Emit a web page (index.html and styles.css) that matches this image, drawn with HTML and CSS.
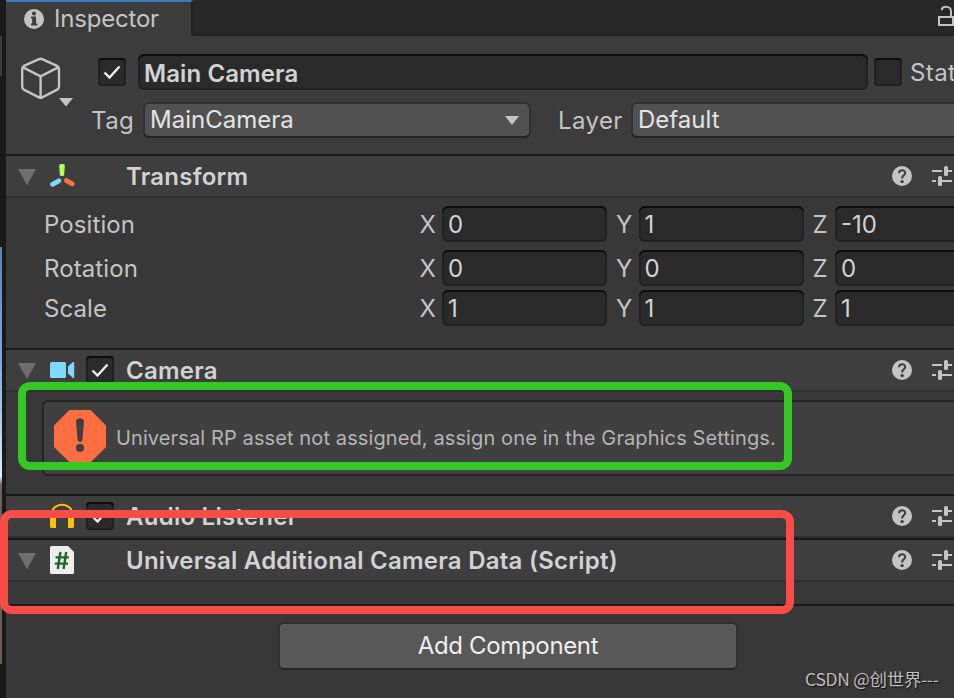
FILE: index.html
```
<!DOCTYPE html>
<html lang="en">

<head>
    <meta charset="UTF-8">
    <meta name="viewport" content="width=device-width, initial-scale=1.0">
    <title>Inspector</title>
    <link rel="stylesheet" href="styles.css">
</head>

<body>

    <!-- shared icons -->
    <svg class="sprite" width="0" height="0">
        <symbol id="icon-check" viewBox="0 0 28 28">
            <path d="M6.5 14.5 L11.5 19.5 L21.5 8.5" fill="none" stroke="#eee" stroke-width="2.4"/>
        </symbol>
        <symbol id="icon-help" viewBox="0 0 20 20">
            <circle cx="10" cy="10" r="10" fill="#c4c4c4"/>
            <path d="M7 7.2 C7 3.3 13.2 3.3 13.2 7 C13.2 9.4 10.1 9.4 10.1 12.4" fill="none" stroke="#3e3e3e" stroke-width="2"/>
            <circle cx="10.1" cy="15.6" r="1.7" fill="#3e3e3e"/>
        </symbol>
        <symbol id="icon-sliders" viewBox="0 0 22 20">
            <path d="M0 5 H10 M16 5 H20 M0 15 H4 M10 15 H20" stroke="#c4c4c4" stroke-width="2"/>
            <rect x="12" y="0" width="4" height="10" rx="1.5" fill="#c4c4c4"/>
            <rect x="6" y="10" width="4" height="10" rx="1.5" fill="#c4c4c4"/>
        </symbol>
    </svg>

    <div class="window">
        <div class="scene-edge">
            <div class="edge-tab"></div>
            <div class="edge-view"></div>
        </div>

        <div class="inspector">
            <div class="tab-bar">
                <div class="tab">
                    <svg width="20" height="20" viewBox="0 0 20 20">
                        <circle cx="10" cy="10" r="10" fill="#c4c4c4"/>
                        <circle cx="10" cy="4.4" r="2" fill="#3c3c3c"/>
                        <path d="M7 7.6 H12 V14.6 H13.4 V16.4 H7 V14.6 H8.2 V9.4 H7 Z" fill="#3c3c3c"/>
                    </svg>
                    <span>Inspector</span>
                </div>
                <svg class="lock" width="16" height="22" viewBox="0 0 16 22">
                    <path d="M1 12 H15 V20 H1 Z M3.6 5 C4.4 0.6 13 0.6 13 6.4 V12" fill="none" stroke="#c4c4c4" stroke-width="2"/>
                </svg>
            </div>

            <div class="object-header">
                <div class="object-icon">
                    <svg width="52" height="50" viewBox="0 0 52 50">
                        <path d="M18 2.2 Q19.6 1.2 21.2 2.2 L36 8.8 Q38 10 38 12 V29.6 Q38 31.6 36.2 32.6 L21.2 40.4 Q19.6 41.2 18 40.4 L2.8 32.6 Q1.2 31.6 1.2 29.6 V12 Q1.2 10 3 8.8 Z M2 10.4 L19.6 19.4 L37.2 10.4 M19.6 19.4 V41" fill="none" stroke="#c4c4c4" stroke-width="2.4"/>
                        <path d="M38 41 H52 L45 49.5 Z" fill="#c4c4c4"/>
                    </svg>
                </div>
                <div class="object-fields">
                    <div class="name-row">
                        <div class="checkbox"><svg width="28" height="28"><use href="#icon-check"/></svg></div>
                        <div class="field name-field">Main Camera</div>
                        <div class="checkbox"></div>
                        <span class="static-label">Static</span>
                    </div>
                    <div class="tag-row">
                        <span class="tag-label">Tag</span>
                        <div class="dropdown tag-dropdown">
                            <span>MainCamera</span>
                            <svg width="14" height="9" viewBox="0 0 14 9"><path d="M0 0 H14 L7 9 Z" fill="#c4c4c4"/></svg>
                        </div>
                        <span class="layer-label">Layer</span>
                        <div class="dropdown layer-dropdown"><span>Default</span></div>
                    </div>
                </div>
            </div>

            <div class="component">
                <div class="component-header">
                    <div class="foldout"></div>
                    <svg class="component-icon" width="26" height="28" viewBox="0 0 26 28">
                        <path d="M9.2 4 Q9.2 2 11 2 H13 Q14.8 2 14.8 4 L14.2 12.4 Q14 14 12.8 14 H11.2 Q10 14 9.8 12.4 Z" fill="#b2ff59"/>
                        <path d="M2.6 22.3 L8.8 18.8" stroke="#80d8ff" stroke-width="4.8" stroke-linecap="round"/>
                        <path d="M16.4 18.6 L22.4 21.8" stroke="#ff6e40" stroke-width="4.8" stroke-linecap="round"/>
                    </svg>
                    <div class="toggle-slot"></div>
                    <span class="component-title">Transform</span>
                    <svg class="help" width="20" height="20"><use href="#icon-help"/></svg>
                    <svg class="sliders" width="22" height="20"><use href="#icon-sliders"/></svg>
                </div>
                <div class="component-body transform-body">
                    <div class="vector-row position-row">
                        <span class="vector-label">Position</span>
                        <span class="axis">X</span><div class="field">0</div>
                        <span class="axis">Y</span><div class="field">1</div>
                        <span class="axis">Z</span><div class="field">-10</div>
                    </div>
                    <div class="vector-row rotation-row">
                        <span class="vector-label">Rotation</span>
                        <span class="axis">X</span><div class="field">0</div>
                        <span class="axis">Y</span><div class="field">0</div>
                        <span class="axis">Z</span><div class="field">0</div>
                    </div>
                    <div class="vector-row">
                        <span class="vector-label">Scale</span>
                        <span class="axis">X</span><div class="field">1</div>
                        <span class="axis">Y</span><div class="field">1</div>
                        <span class="axis">Z</span><div class="field">1</div>
                    </div>
                </div>
            </div>

            <div class="component">
                <div class="component-header">
                    <div class="foldout"></div>
                    <svg class="component-icon" width="26" height="28" viewBox="0 0 26 28">
                        <rect x="0" y="6" width="16" height="16" rx="1.5" fill="#80d8ff"/>
                        <path d="M24.2 6 V22 H23 L18 17.5 V10.5 L23 6 Z" fill="#80d8ff"/>
                    </svg>
                    <div class="toggle-slot">
                        <div class="checkbox"><svg width="28" height="28"><use href="#icon-check"/></svg></div>
                    </div>
                    <span class="component-title">Camera</span>
                    <svg class="help" width="20" height="20"><use href="#icon-help"/></svg>
                    <svg class="sliders" width="22" height="20"><use href="#icon-sliders"/></svg>
                </div>
                <div class="component-body camera-body">
                    <div class="help-box">
                        <svg width="52" height="52" viewBox="0 0 52 52">
                            <path d="M15.5 0 H36.5 L52 15.5 V37 L37 52 H15.5 L0 37 V15.5 Z" fill="#ff6e40"/>
                            <path d="M22 11.5 C22 7 30 7 30 11.5 L28.4 30 C28 32.6 24 32.6 23.6 30 Z" fill="#3f3f3f"/>
                            <circle cx="26" cy="38" r="4.1" fill="#3f3f3f"/>
                        </svg>
                        <span>Universal RP asset not assigned, assign one in the Graphics Settings.</span>
                    </div>
                </div>
            </div>

            <div class="component">
                <div class="component-header">
                    <div class="foldout hidden"></div>
                    <svg class="component-icon" width="26" height="28" viewBox="0 0 26 28">
                        <path d="M1.5 16 V13 C1.5 -0.7 22.5 -0.7 22.5 13 V16" fill="none" stroke="#ffc107" stroke-width="2"/>
                        <path d="M0 14 H6 V26 H1 L0 25 Z M18 14 H24 V25 L23 26 H18 Z" fill="#ffc107"/>
                    </svg>
                    <div class="toggle-slot">
                        <div class="checkbox"><svg width="28" height="28"><use href="#icon-check"/></svg></div>
                    </div>
                    <span class="component-title">Audio Listener</span>
                    <svg class="help" width="20" height="20"><use href="#icon-help"/></svg>
                    <svg class="sliders" width="22" height="20"><use href="#icon-sliders"/></svg>
                </div>
            </div>

            <div class="component">
                <div class="component-header">
                    <div class="foldout"></div>
                    <svg class="component-icon" width="26" height="28" viewBox="0 0 26 28">
                        <path d="M1.5 0 H18 L24 6 V26.5 Q24 28 22.5 28 H1.5 Q0 28 0 26.5 V1.5 Q0 0 1.5 0 Z" fill="#eee"/>
                        <path d="M10.4 6 L7.8 23 M16.2 6 L13.6 23 M5.6 11.4 H18.8 M4.8 17.6 H18" stroke="#1f6624" stroke-width="2.4"/>
                    </svg>
                    <div class="toggle-slot"></div>
                    <span class="component-title">Universal Additional Camera Data (Script)</span>
                    <svg class="help" width="20" height="20"><use href="#icon-help"/></svg>
                    <svg class="sliders" width="22" height="20"><use href="#icon-sliders"/></svg>
                </div>
                <div class="component-body script-body"></div>
            </div>

            <div class="add-area">
                <button class="add-button">Add Component</button>
            </div>
        </div>

        <!-- annotations drawn over the panel -->
        <div class="mark mark-green"></div>
        <div class="mark mark-red"></div>
        <div class="watermark">CSDN @创世界---</div>
    </div>

</body>

</html>
```
FILE: styles.css
```
* {
    margin: 0;
    padding: 0;
    box-sizing: border-box;
}

body {
    background: #383838;
    color: #c4c4c4;
    font-family: Inter, "Noto Sans", sans-serif;
    font-size: 24px;
    line-height: 28px;
    letter-spacing: 0;
    overflow: hidden;
}

svg {
    display: block;
    flex-shrink: 0;
}

.sprite {
    position: absolute;
}

.window {
    position: relative;
    display: flex;
    width: 954px;
    height: 698px;
    overflow: hidden;
}

.scene-edge {
    flex: 0 0 6px;
    background: #191919;
    padding-top: 36px;
}

.edge-tab {
    width: 2px;
    height: 40px;
    background: #3c3c3c;
}

.edge-view {
    width: 2px;
    height: 417px;
    margin-top: 171px;
    background: linear-gradient(#5f82b5, #84a9dc 28%, #b9d3ea 45%, #dff0f2 55%, #6a6264 57%, #655f55);
}

.inspector {
    flex: 1;
    min-width: 0;
}

.tab-bar {
    display: flex;
    justify-content: space-between;
    height: 36px;
    background: #282828;
    border-bottom: 2px solid #232323;
}

.tab {
    display: flex;
    align-items: center;
    gap: 10px;
    width: 187px;
    height: 36px;
    padding: 0 0 0 18px;
    background: #3c3c3c;
    border-top: 2px solid #3a79bb;
    border-right: 2px solid #232323;
    letter-spacing: -0.2px;
}

.tab svg {
    margin-top: -1px;
}

.lock {
    margin: 5px 0 0;
}

.object-header {
    display: flex;
    height: 118px;
    padding: 18px 0 0 15px;
    background: #3c3c3c;
}

.object-icon {
    width: 71px;
    padding-top: 3px;
}

.object-fields {
    flex: 1;
    min-width: 0;
}

.name-row,
.tag-row {
    display: flex;
    align-items: center;
    white-space: nowrap;
}

.name-row {
    height: 36px;
    padding-left: 6px;
}

.checkbox {
    flex: 0 0 28px;
    height: 28px;
    background: #2a2a2a;
    border-radius: 4px;
    box-shadow: inset 0 2px #0d0d0d, inset 0 0 0 2px #212121;
}

.field {
    flex-shrink: 0;
    height: 36px;
    padding: 5px 6px 3px;
    background: #2a2a2a;
    border-radius: 6px;
    box-shadow: inset 0 2px #0d0d0d, inset 0 0 0 2px #212121;
    color: #d2d2d2;
}

.name-field {
    width: 730px;
    margin: 0 6px 0 12px;
    padding-top: 6px;
    font-weight: 600;
    letter-spacing: 0.1px;
}

.static-label {
    margin-left: 8px;
    padding-top: 2px;
    letter-spacing: 0.4px;
}

.tag-row {
    height: 36px;
    margin-top: 12px;
}

.tag-label,
.layer-label {
    flex-shrink: 0;
    padding-top: 2px;
    letter-spacing: 0.4px;
}

.tag-label {
    width: 52px;
    margin-left: -1px;
}

.layer-label {
    width: 73px;
    margin-left: 27px;
}

.dropdown {
    display: flex;
    flex-shrink: 0;
    align-items: center;
    justify-content: space-between;
    height: 36px;
    padding: 0 12px 0 7px;
    background: #515151;
    border-radius: 6px;
    box-shadow: inset 0 -2px #242424, inset 0 0 0 2px #303030;
    color: #e4e4e4;
}

.tag-dropdown {
    width: 388px;
}

.layer-dropdown {
    width: 390px;
}

.component {
    border-top: 2px solid #1a1a1a;
}

.component-header {
    display: flex;
    align-items: center;
    height: 42px;
    padding-left: 12px;
    background: #3e3e3e;
    border-bottom: 2px solid #303030;
}

.foldout {
    width: 18px;
    height: 16px;
    margin-top: 2px;
    background: #6e6e6e;
    clip-path: polygon(0 0, 100% 0, 50% 100%);
}

.foldout.hidden {
    visibility: hidden;
}

.component-icon {
    margin-left: 14px;
}

.toggle-slot {
    width: 28px;
    margin: 0 12px 0 10px;
}

.component-title {
    flex: 1;
    padding-top: 2px;
    color: #d2d2d2;
    font-weight: 600;
    letter-spacing: 0.25px;
    white-space: nowrap;
}

.help {
    margin-right: 20px;
}

.transform-body {
    height: 150px;
    padding: 8px 0 0 38px;
}

.vector-row {
    display: flex;
    align-items: center;
    height: 36px;
}

.position-row {
    margin-bottom: 8px;
}

.rotation-row {
    margin-bottom: 4px;
}

.vector-label {
    flex: 0 0 366.5px;
    padding-top: 2px;
    letter-spacing: 0.1px;
}

.axis {
    flex: 0 0 31.5px;
    padding: 2px 0 0 9px;
}

.vector-row .field {
    width: 165px;
}

.camera-body {
    height: 102px;
    padding: 8px 0 0 36px;
}

.help-box {
    display: flex;
    align-items: center;
    gap: 10px;
    width: 940px;
    height: 76px;
    padding: 0 0 4px 10px;
    background: #404040;
    border: 2px solid #242424;
    border-radius: 6px;
    color: #b4b4b4;
    font-size: 20px;
    letter-spacing: 0.11px;
}

.help-box span {
    padding-top: 4px;
}

.script-body {
    height: 22px;
}

.add-area {
    height: 94px;
    padding: 16px 0 0 272px;
    border-top: 2px solid #1a1a1a;
}

.add-button {
    width: 460px;
    height: 48px;
    background: #585858;
    border: 2px solid #303030;
    border-bottom-color: #242424;
    border-radius: 6px;
    color: #eee;
    font: inherit;
    letter-spacing: -0.35px;
}

.mark {
    position: absolute;
    border: 8px solid;
    border-radius: 12px;
}

.mark-green {
    left: 18px;
    top: 382px;
    width: 774px;
    height: 88px;
    border-color: #35c724;
}

.mark-red {
    left: 0;
    top: 510px;
    width: 794px;
    height: 104px;
    border-color: #f84c46;
}

.watermark {
    position: absolute;
    left: 805px;
    top: 665px;
    color: #bdbdbd;
    font-family: "Noto Sans CJK SC", sans-serif;
    font-size: 17.5px;
    letter-spacing: -0.3px;
    white-space: nowrap;
    text-shadow: 1px 1px 1px #111;
}
```
